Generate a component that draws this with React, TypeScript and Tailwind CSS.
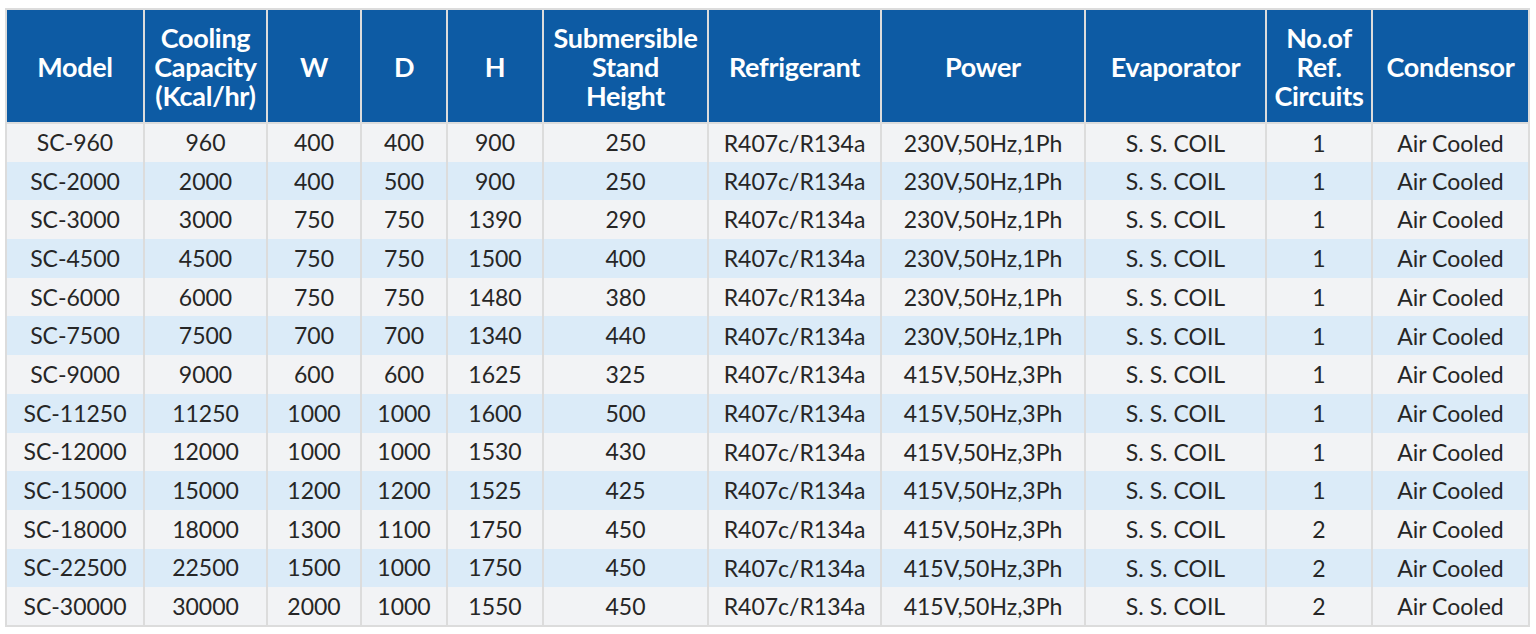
const rows: string[][] = [
  ["SC-960", "960", "400", "400", "900", "250", "230V,50Hz,1Ph", "1"],
  ["SC-2000", "2000", "400", "500", "900", "250", "230V,50Hz,1Ph", "1"],
  ["SC-3000", "3000", "750", "750", "1390", "290", "230V,50Hz,1Ph", "1"],
  ["SC-4500", "4500", "750", "750", "1500", "400", "230V,50Hz,1Ph", "1"],
  ["SC-6000", "6000", "750", "750", "1480", "380", "230V,50Hz,1Ph", "1"],
  ["SC-7500", "7500", "700", "700", "1340", "440", "230V,50Hz,1Ph", "1"],
  ["SC-9000", "9000", "600", "600", "1625", "325", "415V,50Hz,3Ph", "1"],
  ["SC-11250", "11250", "1000", "1000", "1600", "500", "415V,50Hz,3Ph", "1"],
  ["SC-12000", "12000", "1000", "1000", "1530", "430", "415V,50Hz,3Ph", "1"],
  ["SC-15000", "15000", "1200", "1200", "1525", "425", "415V,50Hz,3Ph", "1"],
  ["SC-18000", "18000", "1300", "1100", "1750", "450", "415V,50Hz,3Ph", "2"],
  ["SC-22500", "22500", "1500", "1000", "1750", "450", "415V,50Hz,3Ph", "2"],
  ["SC-30000", "30000", "2000", "1000", "1550", "450", "415V,50Hz,3Ph", "2"],
];

const headers: string[][] = [
  ["Model"],
  ["Cooling", "Capacity", "(Kcal/hr)"],
  ["W"],
  ["D"],
  ["H"],
  ["Submersible", "Stand", "Height"],
  ["Refrigerant"],
  ["Power"],
  ["Evaporator"],
  ["No.of", "Ref.", "Circuits"],
  ["Condensor"],
];

const widths = ["w-[138px]", "w-[123px]", "w-[94px]", "w-[86px]", "w-[96px]", "w-[165px]", "w-[173px]", "w-[204px]", "w-[181px]", "w-[106px]", "w-[157px]"];

export default function App() {
  return (
    <div className="min-h-[634px] bg-white pl-[5px] pt-[8px] font-['Lato','Open_Sans',sans-serif]">
      <table className="table-fixed border-collapse border-2 border-[#dcdcdc] text-center">
        <colgroup>
          {widths.map((w) => (
            <col key={w} className={w} />
          ))}
        </colgroup>
        <thead>
          {/* header: bold white on blue, multi-line labels stacked */}
          <tr className="h-[114px] bg-[#0d5ba4] text-white">
            {headers.map((h) => (
              <th key={h.join()} className="border-2 border-[#dcdcdc] px-0 text-[27px] font-bold leading-[29px] tracking-[-0.3px]">
                {h.map((line) => (
                  <div key={line}>{line}</div>
                ))}
              </th>
            ))}
          </tr>
        </thead>
        <tbody className="text-[23px] text-[#262626]">
          {rows.map((r, i) => (
            <tr key={r[0]} className={`h-[38.7px] ${i % 2 === 0 ? "bg-[#f2f3f5]" : "bg-[#dbebf8]"}`}>
              {r.slice(0, 6).map((c, j) => (
                <td key={j} className="border-x-2 border-[#dcdcdc] p-0 leading-none">{c}</td>
              ))}
              <td className="border-x-2 border-[#dcdcdc] p-0">R407c/R134a</td>
              <td className="border-x-2 border-[#dcdcdc] p-0">{r[6]}</td>
              <td className="border-x-2 border-[#dcdcdc] p-0">S. S. COIL</td>
              <td className="border-x-2 border-[#dcdcdc] p-0">{r[7]}</td>
              <td className="border-x-2 border-[#dcdcdc] p-0">Air Cooled</td>
            </tr>
          ))}
        </tbody>
      </table>
    </div>
  );
}
